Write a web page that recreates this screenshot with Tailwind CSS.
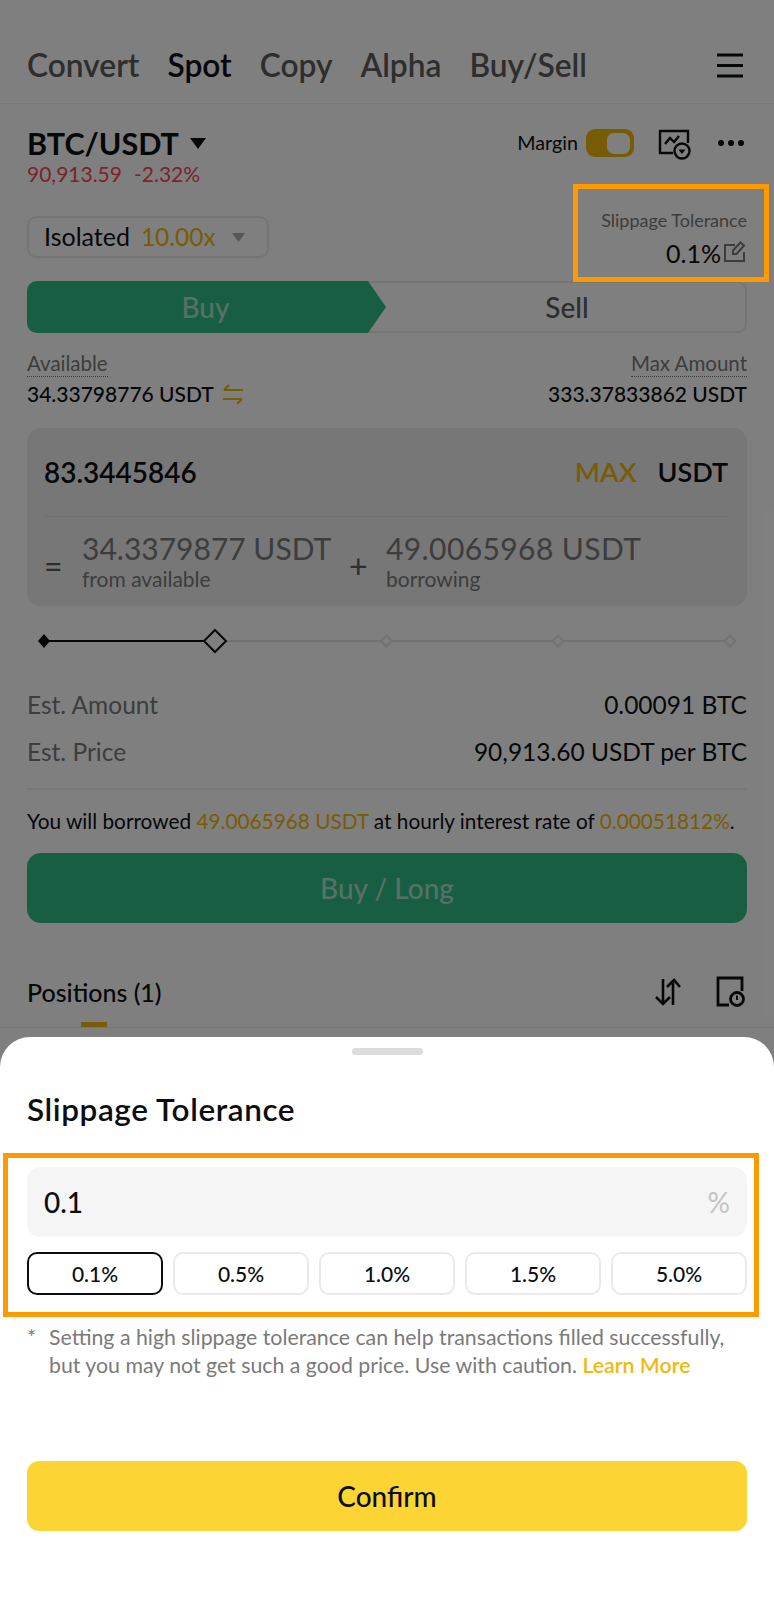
<!DOCTYPE html>
<html lang="en">
<head>
    <meta charset="UTF-8">
    <meta name="viewport" content="width=device-width, initial-scale=1.0">
    <title>Slippage Tolerance</title>
    <script src="https://cdn.jsdelivr.net/npm/@tailwindcss/browser@4"></script>
</head>
<body class="bg-white font-['Lato','Liberation_Sans',sans-serif]">
<div class="relative w-[774px] h-[1600px] overflow-hidden bg-white text-[#0b0e11]">

    <!-- page behind the sheet -->
    <nav class="h-[104px] pt-[28px] pl-[27px] pr-[30px] flex items-center border-b border-[#eeeeee]">
        <div class="flex gap-[28px] text-[31.700px] font-semibold text-[#5c5c5c]">
            <span>Convert</span>
            <span class="text-[#0b0e11]">Spot</span>
            <span>Copy</span>
            <span>Alpha</span>
            <span>Buy/Sell</span>
        </div>
        <svg class="ml-auto" width="27" height="25" viewBox="0 0 27 25" fill="none" stroke="#0b0e11" stroke-width="3"><path d="M0 2h26M0 12.500h26M0 23h26"/></svg>
    </nav>

    <div class="h-[80px] pl-[27px] pr-[30px] flex justify-between">
        <div class="pt-[21px]">
            <div class="flex items-center h-[36px]">
                <span class="text-[30.500px] font-bold leading-[36px]">BTC/USDT</span>
                <svg class="ml-[11px]" width="16" height="11" viewBox="0 0 16 11"><path d="M0 0h16L8 11z" fill="#0b0e11"/></svg>
            </div>
            <div class="mt-[1px] text-[21px] leading-[24px] text-[#f6465d] flex gap-[12px]"><span>90,913.59</span><span>-2.32%</span></div>
        </div>
        <div class="pt-[25px] flex items-start">
            <span class="text-[19.700px] leading-[28px]">Margin</span>
            <div class="ml-[8px] w-[48px] h-[28px] rounded-[9px] bg-[#f0b90b] flex justify-end items-center pr-[4px]">
                <div class="w-[23px] h-[21px] rounded-[7px] bg-white"></div>
            </div>
            <svg class="ml-[24px]" width="33" height="31" viewBox="0 0 33 31" fill="none" stroke="#0b0e11" stroke-width="2.4">
                <path d="M15 24H2V2h28v12"/>
                <path d="M7 15l5-6 4 4 5-6"/>
                <circle cx="24" cy="22" r="7.5" fill="white"/>
                <path d="M20.5 20.5h7L24 25z" fill="#0b0e11" stroke="none"/>
            </svg>
            <svg class="ml-[27px] mt-[11px]" width="26" height="6" viewBox="0 0 26 6" fill="#0b0e11"><circle cx="3" cy="3" r="3"/><circle cx="13" cy="3" r="3"/><circle cx="23" cy="3" r="3"/></svg>
        </div>
    </div>

    <div class="h-[97px] pl-[27px] pr-[27px] flex justify-between">
        <div class="mt-[32px] w-[242px] h-[42px] rounded-[9px] border-2 border-[#eaeaea] pl-[15px] flex items-center text-[25px]">
            <span>Isolated</span>
            <span class="ml-[11px] text-[24.500px] text-[#f0b90b]">10.00x</span>
            <svg class="ml-[16px]" width="13" height="9" viewBox="0 0 13 9"><path d="M0 0h13L6.500 9z" fill="#aeaeae"/></svg>
        </div>
        <div class="pt-[26px] text-right">
            <div class="text-[18px] leading-[20px] text-[#7a7a7a]">Slippage Tolerance</div>
            <div class="mt-[9px] flex justify-end items-center">
                <span class="text-[25px] leading-[28px] mr-[3px]">0.1%</span>
                <svg class="mt-[-3px] mr-[1px]" width="22" height="21" viewBox="0 0 22 21" fill="none" stroke="#7a7a7a" stroke-width="2"><path d="M11 4H1v16h19v-9"/><path d="M9 13V9.500L16.500 1.500 20 4.500l-7.500 8.500z"/></svg>
            </div>
        </div>
    </div>

    <div class="relative mx-[27px] h-[52px] rounded-[9px] border-2 border-[#eaeaea] flex items-center text-[28px] font-medium">
        <div class="absolute left-[-2px] top-[-2px]">
            <svg width="360" height="52" viewBox="0 0 360 52"><path d="M10 0H341L359 26 341 52H10A10 10 0 0 1 0 42V10A10 10 0 0 1 10 0z" fill="#2ebd85"/></svg>
        </div>
        <span class="relative w-[353px] text-center text-white/60">Buy</span>
        <span class="relative flex-1 text-center pl-[7px] text-[#5c5c5c]">Sell</span>
    </div>

    <div class="mt-[18px] px-[27px] flex justify-between text-[21px]">
        <div>
            <span class="block w-fit text-[20.500px] leading-[24px] pb-[1px] text-[#7a7a7a] border-b border-dotted border-[#7a7a7a]">Available</span>
            <div class="flex items-center leading-[24px] mt-[5px] font-medium">34.33798776 USDT
                <svg class="ml-[8px]" width="22" height="21" viewBox="0 0 22 21" fill="none" stroke="#f0b90b" stroke-width="2.200"><path d="M21 6H2M7 1L2 6M1 15h19M15 20l5-5"/></svg>
            </div>
        </div>
        <div>
            <span class="block w-fit ml-auto text-[20.500px] leading-[24px] pb-[1px] text-[#7a7a7a] border-b border-dotted border-[#7a7a7a]">Max Amount</span>
            <div class="leading-[24px] mt-[5px] text-right font-medium">333.37833862 USDT</div>
        </div>
    </div>

    <div class="mt-[22px] mx-[27px] h-[178px] rounded-[14px] bg-[#eeeeee] pl-[17px] pr-[19px]">
        <div class="h-[89px] border-b border-[#e2e2e2] flex items-center justify-between text-[27px] font-semibold">
            <span class="text-[28px]">83.3445846</span>
            <span class="flex gap-[21px]"><span class="text-[#f0b90b]">MAX</span><span>USDT</span></span>
        </div>
        <div class="pt-[13px] flex">
            <span class="w-[38px] pt-[18px] text-[32px] leading-[36px] text-[#5c5c5c]">=</span>
            <div class="w-[267px]">
                <div class="text-[30px] leading-[36px] text-[#7a7a7a]">34.3379877 USDT</div>
                <div class="text-[21px] leading-[26px] text-[#7a7a7a]">from available</div>
            </div>
            <span class="w-[37px] pt-[18px] text-[32px] leading-[36px] text-[#5c5c5c]">+</span>
            <div>
                <div class="text-[30px] leading-[36px] tracking-[0.4px] text-[#7a7a7a]">49.0065968 USDT</div>
                <div class="text-[21px] leading-[26px] text-[#7a7a7a]">borrowing</div>
            </div>
        </div>
    </div>

    <svg class="mt-[20px] ml-[27px]" width="720" height="30" viewBox="0 0 720 30" fill="none">
        <path d="M188 15H703" stroke="#e4e4e4" stroke-width="2"/>
        <path d="M17 15H188" stroke="#0b0e11" stroke-width="2"/>
        <path d="M17 8l6 7-6 7-6-7z" fill="#0b0e11"/>
        <path d="M188 4l11 11-11 11-11-11z" fill="white" stroke="#0b0e11" stroke-width="2"/>
        <path d="M359.500 9.500l5.500 5.500-5.500 5.500-5.500-5.500zM531 9.500l5.500 5.500-5.500 5.500-5.500-5.500zM703 9.500l5.500 5.500-5.500 5.500-5.500-5.500z" fill="white" stroke="#e4e4e4" stroke-width="2"/>
    </svg>

    <div class="mt-[25px] mx-[27px] text-[24.500px] leading-[47px] h-[94px]">
        <div class="flex justify-between"><span class="text-[#7a7a7a]">Est. Amount</span><span>0.00091 BTC</span></div>
        <div class="flex justify-between"><span class="text-[#7a7a7a]">Est. Price</span><span>90,913.60 USDT per BTC</span></div>
    </div>

    <div class="mt-[13px] mx-[27px] border-t-2 border-[#eeeeee] pt-[19px] text-[20.800px] leading-[24px]">
        You will borrowed <span class="text-[#f0b90b]">49.0065968 USDT</span> at hourly interest rate of <span class="text-[#f0b90b]">0.00051812%</span>.
    </div>

    <div class="mt-[20px] mx-[27px] h-[70px] rounded-[14px] bg-[#2ebd85] flex items-center justify-center text-[28px] font-medium text-white/60">Buy / Long</div>

    <div class="mt-[52px] h-[53px] pl-[27px] pr-[29px] flex justify-between border-b border-[#eaeaea] relative">
        <span class="text-[25px] leading-[34px] font-medium">Positions (1)</span>
        <div class="flex items-start gap-[34px] pt-[2px]">
            <svg width="28" height="30" viewBox="0 0 28 30" fill="none" stroke="#0b0e11" stroke-width="2.600"><path d="M9 2v25M2 20l7 7 7-7M19 28V3M13 10l7-7 6 7"/></svg>
            <svg class="-mt-[1px]" width="29" height="31" viewBox="0 0 29 31" fill="none" stroke="#0b0e11" stroke-width="2.800"><path d="M13 29H2V2h24v13"/><circle cx="21" cy="23" r="6.500"/><path d="M21 19.500V24" stroke-width="2"/></svg>
        </div>
        <div class="absolute left-[81px] bottom-0 w-[26px] h-[5px] bg-[#f0b90b]"></div>
    </div>

    <!-- dim overlay -->
    <div class="absolute inset-0 bg-black/50"></div>

    <!-- highlight on the page -->
    <div class="absolute left-[573px] top-[184px] w-[196px] h-[98px] border-[5px] border-[#ff9900]"></div>

    <!-- bottom sheet -->
    <div class="absolute left-0 right-0 top-[1037px] bottom-0 bg-white rounded-t-[30px] px-[27px]">
        <div class="mx-auto mt-[11px] w-[71px] h-[7px] rounded-full bg-[#dcdcdc]"></div>
        <h2 class="mt-[38px] text-[31.500px] leading-[32px] tracking-[0.6px] font-semibold">Slippage Tolerance</h2>
        <div class="mt-[42px] h-[70px] rounded-[14px] bg-[#f5f5f5] px-[17px] flex items-center justify-between text-[28px]">
            <span class="font-medium">0.1</span>
            <span class="text-[#c4c4c4]">%</span>
        </div>
        <div class="mt-[15px] grid grid-cols-5 gap-[10px] text-[21px] font-medium">
            <div class="h-[43px] rounded-[10px] border-2 border-[#0b0e11] flex items-center justify-center">0.1%</div>
            <div class="h-[43px] rounded-[10px] border-2 border-[#eaeaea] flex items-center justify-center">0.5%</div>
            <div class="h-[43px] rounded-[10px] border-2 border-[#eaeaea] flex items-center justify-center">1.0%</div>
            <div class="h-[43px] rounded-[10px] border-2 border-[#eaeaea] flex items-center justify-center">1.5%</div>
            <div class="h-[43px] rounded-[10px] border-2 border-[#eaeaea] flex items-center justify-center">5.0%</div>
        </div>
        <div class="mt-[28px] flex text-[21.300px] leading-[28px] text-[#7a7a7a]">
            <span class="w-[22px]">*</span>
            <p>Setting a high slippage tolerance can help transactions filled successfully,<br>but you may not get such a good price. Use with caution. <span class="text-[#f0b90b] font-semibold">Learn More</span></p>
        </div>
        <div class="mt-[82px] h-[70px] rounded-[12px] bg-[#fcd535] flex items-center justify-center text-[28px] font-medium">Confirm</div>

        <!-- highlight on the sheet -->
        <div class="absolute left-[3px] top-[116px] w-[756px] h-[164px] border-[5px] border-[#ff9900]"></div>
    </div>
</div>
</body>
</html>
